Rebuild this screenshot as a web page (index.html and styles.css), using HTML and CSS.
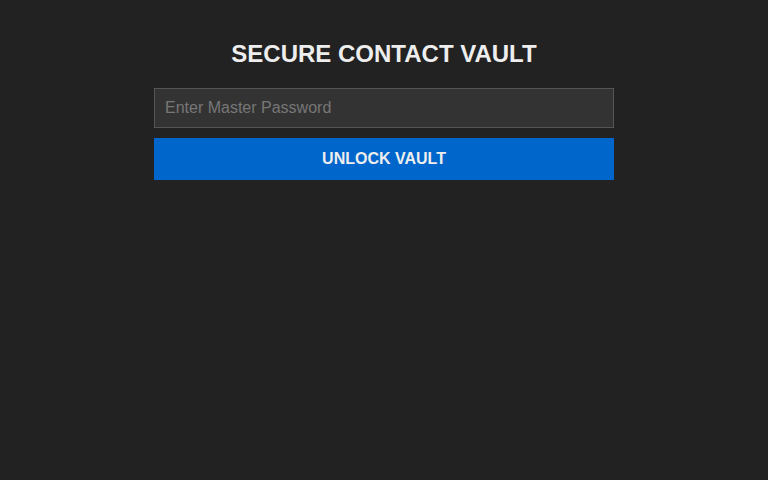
FILE: index.html
```html
<!DOCTYPE html>
<html lang="en">
  <head>
    <meta charset="UTF-8" />
    <meta name="viewport" content="width=device-width, initial-scale=1.0" />
    <title>Secure Contact Vault</title>
    <link rel="stylesheet" href="styles.css">
  </head>
  <body>
    <div class="vault-login">
      <h1>SECURE CONTACT VAULT</h1>
      <input type="password" id="master-password" placeholder="Enter Master Password" />
      <button id="unlock-btn">UNLOCK VAULT</button>
    </div>
  </body>
</html>
```

FILE: styles.css
```css
body {
  margin: 0;
  background-color: #222222;
  color: #eeeeee;
  font-family: "Liberation Sans", Arial, sans-serif;
}

.vault-login {
  display: flex;
  flex-direction: column;
  width: 460px;
  margin: 0 auto;
  padding-top: 40px;
}

.vault-login h1 {
  margin: 0 0 20px;
  font-size: 24px;
  text-align: center;
}

.vault-login input {
  box-sizing: border-box;
  height: 40px;
  margin-bottom: 10px;
  padding: 0 10px;
  border: 1px solid #555555;
  background-color: #333333;
  color: #eeeeee;
  font-family: inherit;
  font-size: 16px;
}

.vault-login input::placeholder {
  color: #777777;
}

.vault-login button {
  height: 42px;
  border: none;
  background-color: #0066cc;
  color: #eeeeee;
  font-family: inherit;
  font-size: 16px;
  font-weight: bold;
  cursor: pointer;
}
```
